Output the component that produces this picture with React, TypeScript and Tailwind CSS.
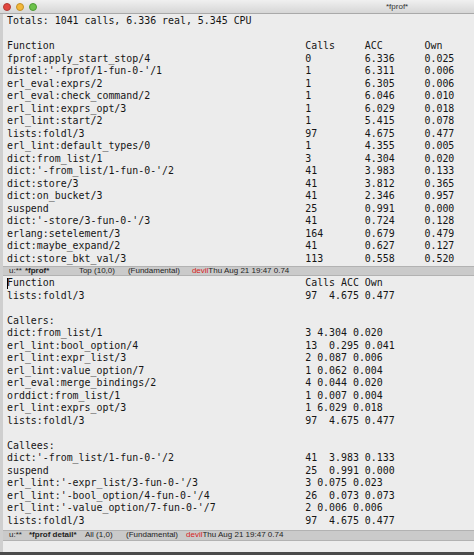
const top: [string, string, string, string][] = [
  ["fprof:apply_start_stop/4", "0", "6.336", "0.025"],
  ["distel:'-fprof/1-fun-0-'/1", "1", "6.311", "0.006"],
  ["erl_eval:exprs/2", "1", "6.305", "0.006"],
  ["erl_eval:check_command/2", "1", "6.046", "0.010"],
  ["erl_lint:exprs_opt/3", "1", "6.029", "0.018"],
  ["erl_lint:start/2", "1", "5.415", "0.078"],
  ["lists:foldl/3", "97", "4.675", "0.477"],
  ["erl_lint:default_types/0", "1", "4.355", "0.005"],
  ["dict:from_list/1", "3", "4.304", "0.020"],
  ["dict:'-from_list/1-fun-0-'/2", "41", "3.983", "0.133"],
  ["dict:store/3", "41", "3.812", "0.365"],
  ["dict:on_bucket/3", "41", "2.346", "0.957"],
  ["suspend", "25", "0.991", "0.000"],
  ["dict:'-store/3-fun-0-'/3", "41", "0.724", "0.128"],
  ["erlang:setelement/3", "164", "0.679", "0.479"],
  ["dict:maybe_expand/2", "41", "0.627", "0.127"],
  ["dict:store_bkt_val/3", "113", "0.558", "0.520"],
];

const callers: [string, string][] = [
  ["dict:from_list/1", "3 4.304 0.020"],
  ["erl_lint:bool_option/4", "13  0.295 0.041"],
  ["erl_lint:expr_list/3", "2 0.087 0.006"],
  ["erl_lint:value_option/7", "1 0.062 0.004"],
  ["erl_eval:merge_bindings/2", "4 0.044 0.020"],
  ["orddict:from_list/1", "1 0.007 0.004"],
  ["erl_lint:exprs_opt/3", "1 6.029 0.018"],
  ["lists:foldl/3", "97  4.675 0.477"],
];

const callees: [string, string][] = [
  ["dict:'-from_list/1-fun-0-'/2", "41  3.983 0.133"],
  ["suspend", "25  0.991 0.000"],
  ["erl_lint:'-expr_list/3-fun-0-'/3", "3 0.075 0.023"],
  ["erl_lint:'-bool_option/4-fun-0-'/4", "26  0.073 0.073"],
  ["erl_lint:'-value_option/7-fun-0-'/7", "2 0.006 0.006"],
  ["lists:foldl/3", "97  4.675 0.477"],
];

function Line({ text }: { text: string }) {
  return <div className="h-[12.5px] whitespace-pre">{text || " "}</div>;
}

function ModeLine({ buffer, pos, widths }: { buffer: string; pos: string; widths: string[] }) {
  return (
    <div className="h-full flex items-center whitespace-nowrap bg-[#cacaca] border-y border-[#b2b2b2] pl-[6px] font-['Liberation_Sans',Arial,sans-serif] text-[8px] text-[#1e1e1e]">
      <span className={`${widths[0]} pr-[3px]`}>u:**</span>
      <span className={`${widths[1]} pr-[3px] font-bold`}>{buffer}</span>
      <span className={`${widths[2]} pr-[3px]`}>{pos}</span>
      <span className={`${widths[3]} pr-[3px]`}>(Fundamental)</span>
      <span className="text-[#d81e1e]">devil</span>
      <span>Thu Aug 21 19:47 0.74</span>
    </div>
  );
}

export default function App() {
  const row = (a: string, b = "", c = "", d = "") =>
    a.padEnd(50) + b.padEnd(10) + c.padEnd(10) + d;

  return (
    <div className="w-[474px] h-[555px] overflow-hidden flex flex-col bg-[#ececec]">
      {/* title bar */}
      <div className="h-[14px] shrink-0 flex items-center bg-linear-to-b from-[#f0f0f0] to-[#d6d6d6] border-b border-[#a9a9a9]">
        <div className="flex gap-[5px] ml-[3px]">
          <span className="size-[8px] rounded-full bg-[#e2463f] border border-[#b13a33]" />
          <span className="size-[8px] rounded-full bg-[#f3b83a] border border-[#c18f28]" />
          <span className="size-[8px] rounded-full bg-[#6cc24a] border border-[#4c9a35]" />
        </div>
        <span className="ml-[349px] font-['Liberation_Sans',Arial,sans-serif] text-[8px] text-[#333]">
          *fprof*
        </span>
      </div>

      <div className="flex-1 flex flex-col border-l-[3px] border-[#cfcfcf] font-['DejaVu_Sans_Mono',monospace] text-[9.92px] text-[#151515] leading-[12.5px]">
        {/* top pane */}
        <div className="h-[252px] shrink-0 overflow-hidden pl-[4px] pt-[1px]">
          <Line text="Totals: 1041 calls, 6.336 real, 5.345 CPU" />
          <Line text="" />
          <Line text={row("Function", "Calls", "ACC", "Own")} />
          {top.map((r) => (
            <Line key={r[0]} text={row(r[0], r[1], r[2], r[3])} />
          ))}
        </div>

        <div className="h-[10px] shrink-0">
          <ModeLine
            buffer="*fprof*"
            pos="Top (10,0)"
            widths={["min-w-[11px]", "min-w-[54px]", "min-w-[49px]", "min-w-[64px]"]}
          />
        </div>

        {/* bottom pane */}
        <div className="h-[254px] shrink-0 overflow-hidden pl-[4px] pt-[1px]">
          <div className="relative h-[12.5px] whitespace-pre">
            <span className="absolute left-[0px] top-[1px] h-[11px] w-[1px] bg-black" />
            {"Function".padEnd(50) + "Calls ACC Own"}
          </div>
          <Line text={"lists:foldl/3".padEnd(50) + "97  4.675 0.477"} />
          <Line text="" />
          <Line text="Callers:" />
          {callers.map(([n, v], i) => (
            <Line key={"c" + i} text={n.padEnd(50) + v} />
          ))}
          <Line text="" />
          <Line text="Callees:" />
          {callees.map(([n, v], i) => (
            <Line key={"e" + i} text={n.padEnd(50) + v} />
          ))}
        </div>

        <div className="h-[11px] shrink-0">
          <ModeLine
            buffer="*fprof detail*"
            pos="All (1,0)"
            widths={["min-w-[20px]", "min-w-[56px]", "min-w-[41px]", "min-w-[60px]"]}
          />
        </div>

        {/* minibuffer */}
        <div className="flex-1 bg-[#ededed]" />
      </div>

      <div className="h-[3px] shrink-0 bg-[#4b4b4b]" />
    </div>
  );
}
